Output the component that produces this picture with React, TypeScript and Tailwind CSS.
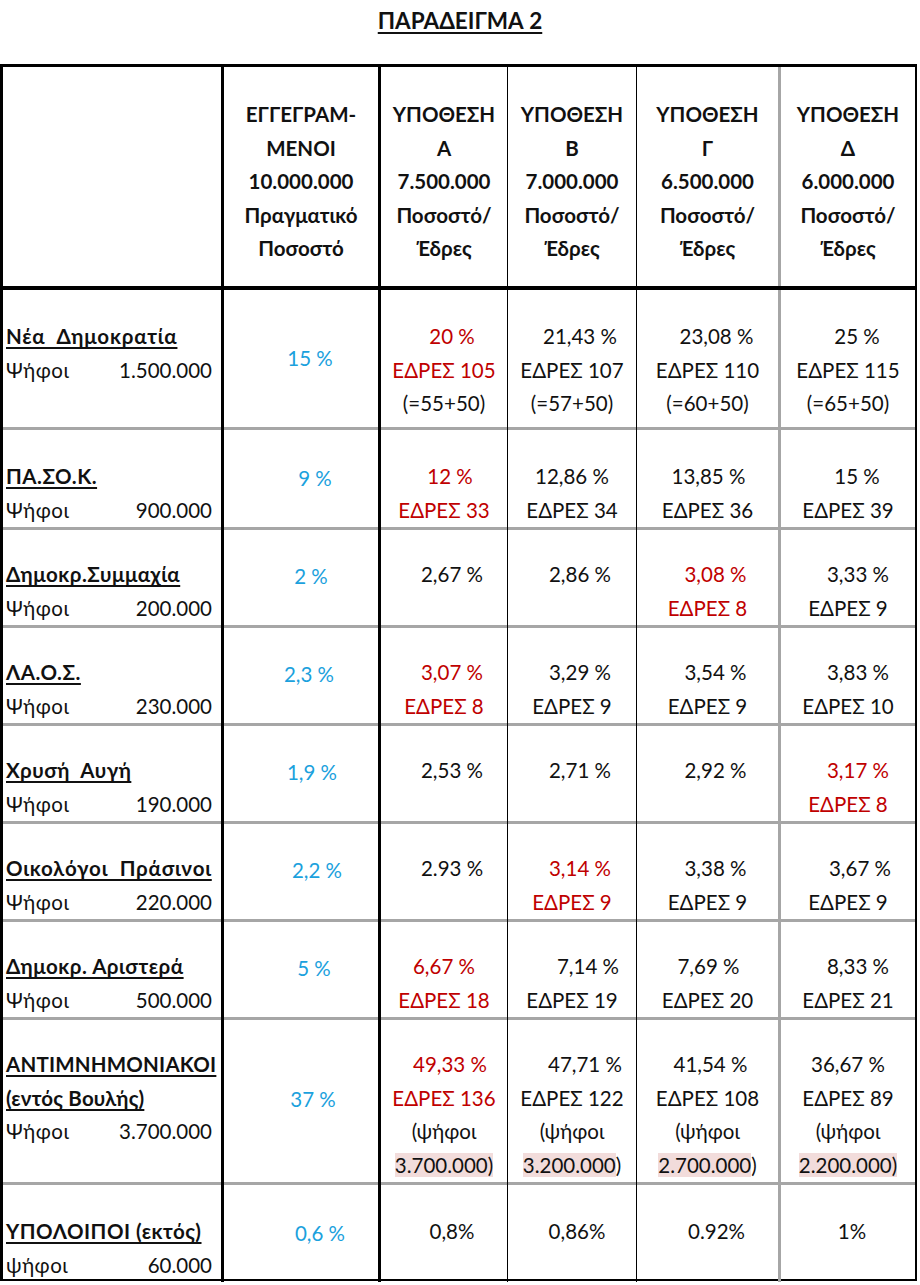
type Line = { t: string; red?: boolean; hl?: boolean; pl?: string };

type Row = {
  name: string[];
  label: string;
  votes: string;
  pct: string;
  pctPl: string;
  h: string;
  track?: string;
  cells: Line[][];
};

const COLS = "grid grid-cols-[221px_157px_127px_129px_144px_134px]";

const RIGHT = [
  "border-r-[3px] border-black",
  "border-r-[3px] border-black",
  "border-r border-black",
  "border-r border-black",
  "border-r-[3px] border-[#a6a6a6]",
  "",
];

const HEAD: string[][] = [
  ["ΕΓΓΕΓΡΑΜ-", "ΜΕΝΟΙ", "10.000.000", "Πραγματικό", "Ποσοστό"],
  ["ΥΠΟΘΕΣΗ", "Α", "7.500.000", "Ποσοστό/", "Έδρες"],
  ["ΥΠΟΘΕΣΗ", "Β", "7.000.000", "Ποσοστό/", "Έδρες"],
  ["ΥΠΟΘΕΣΗ", "Γ", "6.500.000", "Ποσοστό/", "Έδρες"],
  ["ΥΠΟΘΕΣΗ", "Δ", "6.000.000", "Ποσοστό/", "Έδρες"],
];

const ROWS: Row[] = [
  {
    name: ["Νέα  Δημοκρατία"],
    label: "Ψήφοι",
    votes: "1.500.000",
    pct: "15 %",
    pctPl: "pl-[18px]",
    h: "h-[140px]",
    track: "tracking-[0.8px]",
    cells: [
      [{ t: "20 %", red: true, pl: "pl-[16px]" }, { t: "ΕΔΡΕΣ 105", red: true }, { t: "(=55+50)" }],
      [{ t: "21,43 %", pl: "pl-[16px]" }, { t: "ΕΔΡΕΣ 107" }, { t: "(=57+50)" }],
      [{ t: "23,08 %", pl: "pl-[18px]" }, { t: "ΕΔΡΕΣ 110" }, { t: "(=60+50)" }],
      [{ t: "25 %", pl: "pl-[18px]" }, { t: "ΕΔΡΕΣ 115" }, { t: "(=65+50)" }],
    ],
  },
  {
    name: ["ΠΑ.ΣΟ.Κ."],
    label: "Ψήφοι",
    votes: "900.000",
    pct: "9 %",
    pctPl: "pl-[28px]",
    h: "h-[98px]",
    cells: [
      [{ t: "12 %", red: true, pl: "pl-[12px]" }, { t: "ΕΔΡΕΣ 33", red: true }],
      [{ t: "12,86 %" }, { t: "ΕΔΡΕΣ 34" }],
      [{ t: "13,85 %", pl: "pl-[2px]" }, { t: "ΕΔΡΕΣ 36" }],
      [{ t: "15 %", pl: "pl-[18px]" }, { t: "ΕΔΡΕΣ 39" }],
    ],
  },
  {
    name: ["Δημοκρ.Συμμαχία"],
    label: "Ψήφοι",
    votes: "200.000",
    pct: "2 %",
    pctPl: "pl-[20px]",
    h: "h-[98px]",
    cells: [
      [{ t: "2,67 %", pl: "pl-[16px]" }],
      [{ t: "2,86 %", pl: "pl-[16px]" }],
      [{ t: "3,08 %", red: true, pl: "pl-[16px]" }, { t: "ΕΔΡΕΣ 8", red: true }],
      [{ t: "3,33 %", pl: "pl-[20px]" }, { t: "ΕΔΡΕΣ 9" }],
    ],
  },
  {
    name: ["ΛΑ.Ο.Σ."],
    label: "Ψήφοι",
    votes: "230.000",
    pct: "2,3 %",
    pctPl: "pl-[16px]",
    h: "h-[98px]",
    cells: [
      [{ t: "3,07 %", red: true, pl: "pl-[16px]" }, { t: "ΕΔΡΕΣ 8", red: true }],
      [{ t: "3,29 %", pl: "pl-[16px]" }, { t: "ΕΔΡΕΣ 9" }],
      [{ t: "3,54 %", pl: "pl-[16px]" }, { t: "ΕΔΡΕΣ 9" }],
      [{ t: "3,83 %", pl: "pl-[20px]" }, { t: "ΕΔΡΕΣ 10" }],
    ],
  },
  {
    name: ["Χρυσή  Αυγή"],
    label: "Ψήφοι",
    votes: "190.000",
    pct: "1,9 %",
    pctPl: "pl-[22px]",
    h: "h-[98px]",
    cells: [
      [{ t: "2,53 %", pl: "pl-[16px]" }],
      [{ t: "2,71 %", pl: "pl-[16px]" }],
      [{ t: "2,92 %", pl: "pl-[16px]" }],
      [{ t: "3,17 %", red: true, pl: "pl-[20px]" }, { t: "ΕΔΡΕΣ 8", red: true }],
    ],
  },
  {
    name: ["Οικολόγοι  Πράσινοι"],
    label: "Ψήφοι",
    votes: "220.000",
    pct: "2,2 %",
    pctPl: "pl-[32px]",
    h: "h-[98px]",
    track: "tracking-[0.8px]",
    cells: [
      [{ t: "2.93 %", pl: "pl-[16px]" }],
      [{ t: "3,14 %", red: true, pl: "pl-[16px]" }, { t: "ΕΔΡΕΣ 9", red: true }],
      [{ t: "3,38 %", pl: "pl-[16px]" }, { t: "ΕΔΡΕΣ 9" }],
      [{ t: "3,67 %", pl: "pl-[24px]" }, { t: "ΕΔΡΕΣ 9" }],
    ],
  },
  {
    name: ["Δημοκρ. Αριστερά"],
    label: "Ψήφοι",
    votes: "500.000",
    pct: "5 %",
    pctPl: "pl-[26px]",
    h: "h-[98px]",
    cells: [
      [{ t: "6,67 %", red: true }, { t: "ΕΔΡΕΣ 18", red: true }],
      [{ t: "7,14 %", pl: "pl-[32px]" }, { t: "ΕΔΡΕΣ 19" }],
      [{ t: "7,69 %", pl: "pl-[2px]" }, { t: "ΕΔΡΕΣ 20" }],
      [{ t: "8,33 %", pl: "pl-[20px]" }, { t: "ΕΔΡΕΣ 21" }],
    ],
  },
  {
    name: ["ΑΝΤΙΜΝΗΜΟΝΙΑΚΟΙ", "(εντός Βουλής)"],
    label: "Ψήφοι",
    votes: "3.700.000",
    pct: "37 %",
    pctPl: "pl-[24px]",
    h: "h-[167px]",
    track: "tracking-[0.2px]",
    cells: [
      [
        { t: "49,33 %", red: true, pl: "pl-[12px]" },
        { t: "ΕΔΡΕΣ 136", red: true },
        { t: "(ψήφοι" },
        { t: "3.700.000)", hl: true },
      ],
      [{ t: "47,71 %", pl: "pl-[26px]" }, { t: "ΕΔΡΕΣ 122" }, { t: "(ψήφοι" }, { t: "3.200.000", hl: true }],
      [{ t: "41,54 %", pl: "pl-[6px]" }, { t: "ΕΔΡΕΣ 108" }, { t: "(ψήφοι" }, { t: "2.700.000", hl: true }],
      [{ t: "36,67 %" }, { t: "ΕΔΡΕΣ 89" }, { t: "(ψήφοι" }, { t: "2.200.000)", hl: true }],
    ],
  },
  {
    name: ["ΥΠΟΛΟΙΠΟΙ (εκτός)"],
    label: "ψήφοι",
    votes: "60.000",
    pct: "0,6 %",
    pctPl: "pl-[38px]",
    h: "h-[94px]",
    cells: [
      [{ t: "0,8%", pl: "pl-[16px]" }],
      [{ t: "0,86%", pl: "pl-[10px]" }],
      [{ t: "0.92%", pl: "pl-[18px]" }],
      [{ t: "1%", pl: "pl-[8px]" }],
    ],
  },
];

function LineText({ l }: { l: Line }) {
  if (l.hl) {
    // some cells keep the closing paren outside the highlight
    const tail = l.t.endsWith(")") ? "" : ")";
    return (
      <>
        <span className="bg-[#f2dcdb]">{l.t}</span>
        {tail}
      </>
    );
  }
  return <>{l.t}</>;
}

export default function App() {
  return (
    <div className="w-[920px] h-[1285px] bg-white text-[#111] font-['Lato','Open_Sans',sans-serif] text-[20.5px] leading-[33.5px]">
      <div className="h-[64px] pt-[7px] text-center text-[22.5px] leading-[28px]">
        <span className="font-bold underline decoration-2 underline-offset-[3px] [text-decoration-skip-ink:none]">
          ΠΑΡΑΔΕΙΓΜΑ 2
        </span>
      </div>

      <div className="w-[917px] border-t-[3px] border-l-[3px] border-r-[2px] border-b-[2px] border-black">
        {/* header */}
        <div className={`${COLS} h-[223px] border-b-[4px] border-black`}>
          <div className={RIGHT[0]} />
          {HEAD.map((lines, i) => (
            <div key={i} className={`${RIGHT[i + 1]} pt-[31px] text-center font-bold`}>
              {lines.map((t, j) => (
                <div key={j}>{t}</div>
              ))}
            </div>
          ))}
        </div>

        {ROWS.map((r, ri) => {
          const last = ri === ROWS.length - 1;
          const bottom = last ? "" : "border-b-[3px] border-[#a6a6a6]";
          return (
            <div key={ri} className={`${COLS} ${r.h}`}>
              <div className={`flex flex-col ${RIGHT[0]}`}>
                <div className={`flex-1 pt-[30px] pl-[3px] pr-[9px] ${bottom}`}>
                  {r.name.map((n, k) => (
                    <div key={k} className={`font-bold whitespace-pre ${r.track ?? "tracking-[0.5px]"}`}>
                      <span className="underline decoration-2 underline-offset-[3px] [text-decoration-skip-ink:none]">
                        {n}
                      </span>
                    </div>
                  ))}
                  <div className="flex justify-between">
                    <span className="tracking-[0.5px]">{r.label}</span>
                    <span>{r.votes}</span>
                  </div>
                </div>
              </div>

              <div className={`flex flex-col ${RIGHT[1]}`}>
                <div className={`flex-1 flex items-center justify-center ${r.pctPl} text-[#1ba1dd] ${bottom}`}>
                  {r.pct}
                </div>
              </div>

              {r.cells.map((lines, ci) => (
                <div key={ci} className={`flex flex-col ${RIGHT[ci + 2]}`}>
                  <div className={`flex-1 pt-[30px] text-center ${bottom}`}>
                    {lines.map((l, li) => (
                      <div key={li} className={`${l.pl ?? ""} ${l.red ? "text-[#c00000]" : ""}`}>
                        <LineText l={l} />
                      </div>
                    ))}
                  </div>
                </div>
              ))}
            </div>
          );
        })}
      </div>
    </div>
  );
}
